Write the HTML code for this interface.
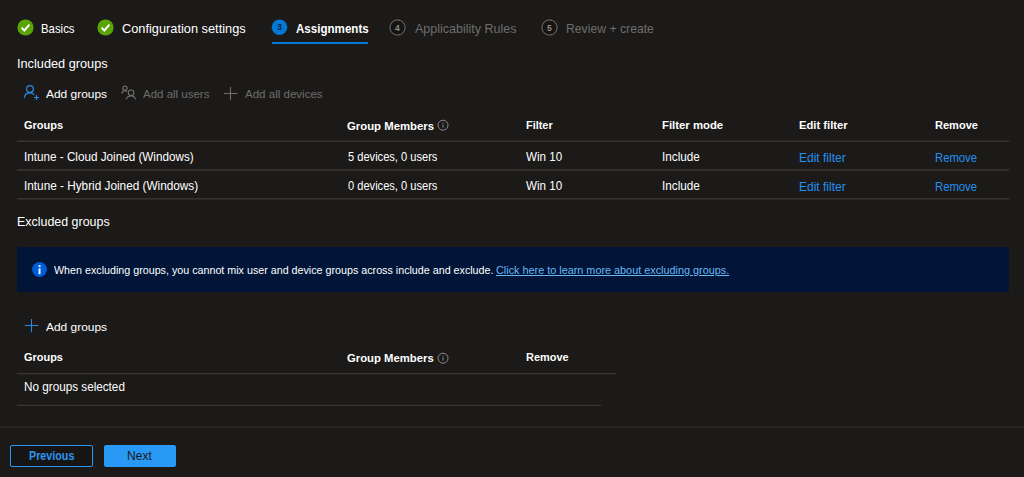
<!DOCTYPE html>
<html><head><meta charset="utf-8"><title>Assignments</title>
<style>
html,body{margin:0;padding:0;}
body{width:1024px;height:477px;background:#1b1a19;overflow:hidden;position:relative;
 font-family:"Liberation Sans",sans-serif;color:#fff;font-size:12px;}
.t{position:absolute;white-space:nowrap;line-height:16px;transform-origin:0 50%;}
.hl{position:absolute;height:1px;background:#3a3938;}
.abs{position:absolute;}
</style></head><body>

<svg class="abs" style="left:16.7px;top:19.1px" width="17" height="17" viewBox="0 0 17 17"><circle cx="8.5" cy="8.5" r="8.1" fill="#58a606"/><path d="M4.6 8.8 L7.4 11.5 L12.4 5.7" fill="none" stroke="#fff" stroke-width="2"/></svg>
<svg class="abs" style="left:97px;top:19.1px" width="17" height="17" viewBox="0 0 17 17"><circle cx="8.5" cy="8.5" r="8.1" fill="#58a606"/><path d="M4.6 8.8 L7.4 11.5 L12.4 5.7" fill="none" stroke="#fff" stroke-width="2"/></svg>
<svg class="abs" style="left:271px;top:19px" width="17" height="17" viewBox="0 0 17 17"><circle cx="8.5" cy="8.25" r="7.8" fill="#0078d4"/><text x="8.5" y="11.3" font-size="8.5" font-weight="bold" text-anchor="middle" fill="#10243a" font-family="Liberation Sans, sans-serif">3</text></svg>
<div class="abs" style="left:271.5px;top:42px;width:96.5px;height:2px;background:#0078d4"></div>
<svg class="abs" style="left:389.4px;top:19.4px" width="17" height="17" viewBox="0 0 17 17"><circle cx="8.5" cy="8.5" r="7.6" fill="#151413" stroke="#777674" stroke-width="1"/><text x="8.3" y="11.7" font-size="8.5" font-weight="bold" text-anchor="middle" fill="#8f8e8c" font-family="Liberation Sans, sans-serif">4</text></svg>
<svg class="abs" style="left:541px;top:19.2px" width="17" height="17" viewBox="0 0 17 17"><circle cx="8.5" cy="8.5" r="7.6" fill="#151413" stroke="#777674" stroke-width="1"/><text x="8.3" y="11.7" font-size="8.5" font-weight="bold" text-anchor="middle" fill="#8f8e8c" font-family="Liberation Sans, sans-serif">5</text></svg>
<svg class="abs" style="left:23px;top:84px" width="17" height="17" viewBox="0 0 17 17" fill="none" stroke="#2b8ae0" stroke-width="1.2"><circle cx="7" cy="5" r="3.4"/><path d="M1.3 13.8 C1.8 10.6 4.2 8.9 7 8.9 C8.8 8.9 10.4 9.6 11.3 11"/><path d="M13.5 11v5M11 13.5h5" stroke-width="1.1"/></svg>
<svg class="abs" style="left:121.3px;top:85.4px" width="15.9" height="15.9" viewBox="0 0 17 17" fill="none" stroke="#737270" stroke-width="1.15"><circle cx="4.2" cy="3.3" r="2.3"/><path d="M1 9.3 C1.2 7 2.6 6 4.2 6 C5.2 6 6 6.4 6.6 7"/><circle cx="10.8" cy="8.3" r="3"/><path d="M5.5 15.3 C6.5 12.5 8.5 11.6 10.8 11.6 C13 11.6 14.8 12.5 15.6 15.3"/></svg>
<svg class="abs" style="left:223.4px;top:85.5px" width="15" height="15" viewBox="0 0 15 15" fill="none" stroke="#706f6d" stroke-width="1.1"><path d="M7.5 0.9v13.4M0.8 7.5h13.6"/></svg>
<svg class="abs" style="left:437px;top:119.3px" width="12" height="12" viewBox="0 0 12 12" fill="none" stroke="#8a8987" stroke-width="1"><circle cx="6" cy="6.2" r="5"/><path d="M6 5.4v3.2M6 3.5v1"/></svg>
<div class="hl" style="left:17px;top:140px;width:992.3px;background:#2a2928"></div><div class="hl" style="left:17px;top:141px;width:992.3px;background:#343332"></div>
<div class="hl" style="left:17px;top:169px;width:992.3px;background:#2f2e2d"></div><div class="hl" style="left:17px;top:170px;width:992.3px;background:#323130"></div>
<div class="hl" style="left:17px;top:198px;width:992.3px;background:#343332"></div><div class="hl" style="left:17px;top:199px;width:992.3px;background:#2a2928"></div>
<div class="abs" style="left:17px;top:247px;width:992px;height:45px;background:#001537;border-radius:2px"></div>
<svg class="abs" style="left:32px;top:262px" width="15" height="15" viewBox="0 0 15 15"><circle cx="7.5" cy="7.5" r="7.4" fill="#015cda"/><rect x="6.6" y="6.4" width="1.9" height="5.8" fill="#fff"/><rect x="6.6" y="3.2" width="1.9" height="1.9" fill="#fff"/></svg>
<svg class="abs" style="left:24.2px;top:318px" width="15" height="15" viewBox="0 0 15 15" fill="none" stroke="#2b8ae0" stroke-width="1.1"><path d="M7.5 0.9v13.4M0.8 7.5h13.6"/></svg>
<svg class="abs" style="left:437px;top:351.7px" width="12" height="12" viewBox="0 0 12 12" fill="none" stroke="#8a8987" stroke-width="1"><circle cx="6" cy="6.2" r="5"/><path d="M6 5.4v3.2M6 3.5v1"/></svg>
<div class="hl" style="left:17px;top:373px;width:599px;background:#363534"></div><div class="hl" style="left:17px;top:374px;width:599px;background:#232221"></div>
<div class="hl" style="left:17px;top:404px;width:584px;background:#222120"></div><div class="hl" style="left:17px;top:405px;width:584px;background:#373635"></div>
<div class="hl" style="left:0px;top:426px;width:1024px;background:#272625"></div><div class="hl" style="left:0px;top:427px;width:1024px;background:#262524"></div>
<div class="abs" style="left:10px;top:445px;width:81px;height:20px;border:1px solid #2b95f0;border-radius:2px;background:#161514"></div>
<div class="abs" style="left:104px;top:445px;width:72px;height:22px;background:#2899f5;border-radius:2px"></div>
<div class="t" id="t1" style="left:41.40px;top:21px;font-size:12.8px;transform:scaleX(0.8898);">Basics</div>
<div class="t" id="t2" style="left:121.80px;top:21px;font-size:12.8px;transform:scaleX(0.9989);">Configuration settings</div>
<div class="t" id="t3" style="left:295.70px;top:21px;font-size:12.8px;transform:scaleX(0.9053);font-weight:bold">Assignments</div>
<div class="t" id="t4" style="left:414.55px;top:21px;font-size:12.8px;transform:scaleX(0.9765);color:#6e6d6b">Applicability Rules</div>
<div class="t" id="t5" style="left:565.80px;top:21px;font-size:12.8px;transform:scaleX(0.9543);color:#6e6d6b">Review + create</div>
<div class="t" id="t6" style="left:17.30px;top:56px;font-size:12.8px;transform:scaleX(0.9953);">Included groups</div>
<div class="t" id="t7" style="left:46.05px;top:86px;font-size:11.6px;transform:scaleX(1.0293);">Add groups</div>
<div class="t" id="t8" style="left:143.05px;top:86px;font-size:11.6px;transform:scaleX(0.9906);color:#6e6d6b">Add all users</div>
<div class="t" id="t9" style="left:245.30px;top:86px;font-size:11.6px;transform:scaleX(0.9957);color:#6e6d6b">Add all devices</div>
<div class="t" id="h1" style="left:24.20px;top:117px;font-size:11.6px;transform:scaleX(0.9482);font-weight:bold">Groups</div>
<div class="t" id="h2" style="left:347.30px;top:118px;font-size:11.6px;transform:scaleX(0.9786);font-weight:bold">Group Members</div>
<div class="t" id="h3" style="left:526.05px;top:117px;font-size:11.6px;transform:scaleX(0.9397);font-weight:bold">Filter</div>
<div class="t" id="h4" style="left:662.30px;top:117px;font-size:11.6px;transform:scaleX(0.9784);font-weight:bold">Filter mode</div>
<div class="t" id="h5" style="left:798.55px;top:117px;font-size:11.6px;transform:scaleX(0.9682);font-weight:bold">Edit filter</div>
<div class="t" id="h6" style="left:934.80px;top:117px;font-size:11.6px;transform:scaleX(0.9510);font-weight:bold">Remove</div>
<div class="t" id="r1a" style="left:24.30px;top:149px;font-size:12.4px;transform:scaleX(0.9438);">Intune - Cloud Joined (Windows)</div>
<div class="t" id="r1b" style="left:347.55px;top:149px;font-size:12.4px;transform:scaleX(0.8951);">5 devices, 0 users</div>
<div class="t" id="r1c" style="left:526.30px;top:149px;font-size:12.4px;transform:scaleX(0.9371);">Win 10</div>
<div class="t" id="r1d" style="left:662.30px;top:149px;font-size:12.4px;transform:scaleX(0.9482);">Include</div>
<div class="t" id="r1e" style="left:799.30px;top:150px;font-size:12.2px;transform:scaleX(0.9837);color:#2490f0">Edit filter</div>
<div class="t" id="r1f" style="left:935.40px;top:150px;font-size:12.2px;transform:scaleX(0.9253);color:#2490f0">Remove</div>
<div class="t" id="r2a" style="left:24.30px;top:178px;font-size:12.4px;transform:scaleX(0.9507);">Intune - Hybrid Joined (Windows)</div>
<div class="t" id="r2b" style="left:347.55px;top:178px;font-size:12.4px;transform:scaleX(0.8951);">0 devices, 0 users</div>
<div class="t" id="r2c" style="left:526.30px;top:178px;font-size:12.4px;transform:scaleX(0.9371);">Win 10</div>
<div class="t" id="r2d" style="left:662.30px;top:178px;font-size:12.4px;transform:scaleX(0.9482);">Include</div>
<div class="t" id="r2e" style="left:799.30px;top:179px;font-size:12.2px;transform:scaleX(0.9837);color:#2490f0">Edit filter</div>
<div class="t" id="r2f" style="left:935.40px;top:179px;font-size:12.2px;transform:scaleX(0.9253);color:#2490f0">Remove</div>
<div class="t" id="t10" style="left:17.30px;top:214px;font-size:12.8px;transform:scaleX(0.9719);">Excluded groups</div>
<div class="t" id="i1" style="left:53.80px;top:262px;font-size:11.6px;transform:scaleX(0.9240);">When excluding groups, you cannot mix user and device groups across include and exclude.</div>
<div class="t" id="i2" style="left:496.05px;top:262px;font-size:11.6px;transform:scaleX(0.9348);color:#6cb8f6;text-decoration:underline">Click here to learn more about excluding groups.</div>
<div class="t" id="t11" style="left:46.05px;top:319px;font-size:11.6px;transform:scaleX(1.0293);">Add groups</div>
<div class="t" id="g1" style="left:24.30px;top:349px;font-size:11.6px;transform:scaleX(0.9434);font-weight:bold">Groups</div>
<div class="t" id="g2" style="left:347.30px;top:350px;font-size:11.6px;transform:scaleX(0.9752);font-weight:bold">Group Members</div>
<div class="t" id="g3" style="left:526.40px;top:349px;font-size:11.6px;transform:scaleX(0.9444);font-weight:bold">Remove</div>
<div class="t" id="g4" style="left:24.30px;top:379px;font-size:12.4px;transform:scaleX(0.9451);">No groups selected</div>
<div class="t" id="b1" style="left:28.80px;top:448px;font-size:11.9px;transform:scaleX(0.9038);font-weight:bold;color:#2b95f0">Previous</div>
<div class="t" id="b2" style="left:127.30px;top:448px;font-size:11.9px;transform:scaleX(1.0142);color:#1b1a19">Next</div>
</body></html>
